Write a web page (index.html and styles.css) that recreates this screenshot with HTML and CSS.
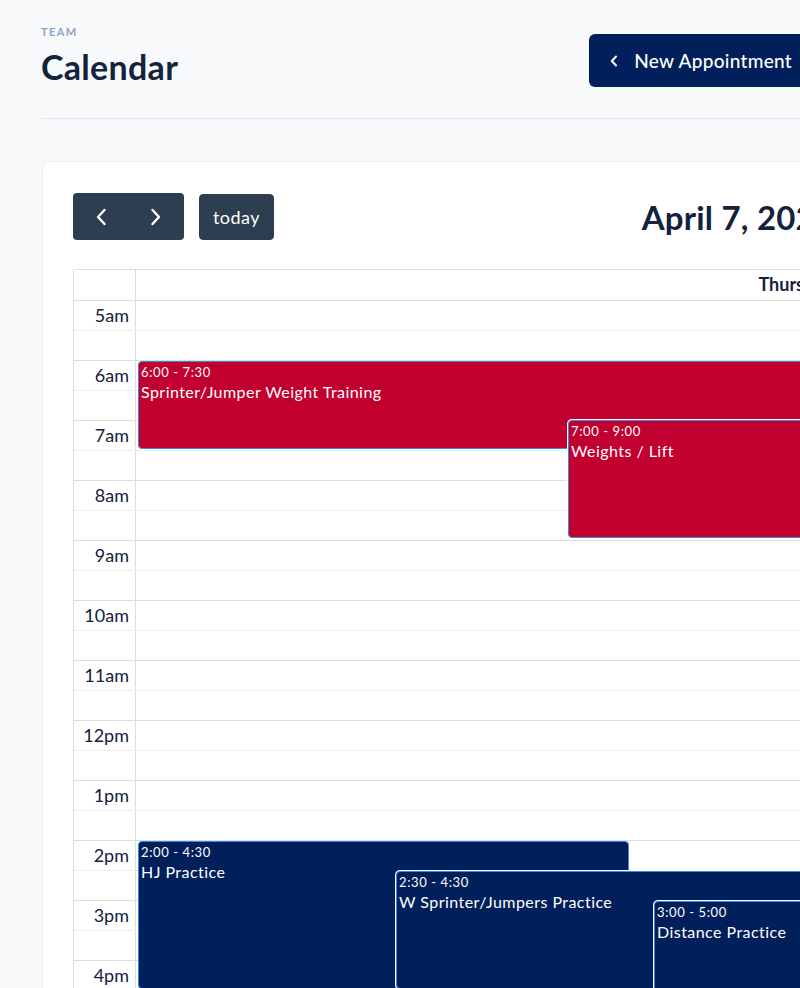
FILE: index.html
```html
<!DOCTYPE html>
<html lang="en">
<head>
<meta charset="utf-8">
<title>Team Calendar</title>
<link rel="stylesheet" href="styles.css">
</head>
<body>
<div class="page">
  <header class="page-header">
    <div class="titles">
      <div class="eyebrow">TEAM</div>
      <h1 class="page-title">Calendar</h1>
    </div>
    <button class="btn-primary" type="button">
      <svg class="chev-sm" viewBox="0 0 8 12" width="8" height="12"><path d="M6 1.5 1.8 6 6 10.5" fill="none" stroke="#fff" stroke-width="2" stroke-linecap="round" stroke-linejoin="round"/></svg>
      <span>New Appointment</span>
    </button>
  </header>
  <div class="divider"></div>

  <section class="card">
    <div class="toolbar">
      <div class="tb-left">
        <div class="btn-group nav-group">
          <button class="nav" type="button" aria-label="prev"><svg viewBox="0 0 12 18" width="12" height="18"><path d="M9.5 2 3 9l6.5 7" fill="none" stroke="#fff" stroke-width="2.4" stroke-linecap="round" stroke-linejoin="round"/></svg></button>
          <button class="nav" type="button" aria-label="next"><svg viewBox="0 0 12 18" width="12" height="18"><path d="M2.5 2 9 9l-6.5 7" fill="none" stroke="#fff" stroke-width="2.4" stroke-linecap="round" stroke-linejoin="round"/></svg></button>
        </div>
        <button class="btn-dark today" type="button">today</button>
      </div>
      <h2 class="cal-title">April 7, 2022</h2>
      <div class="btn-group tb-right">
        <button class="btn-dark" type="button">month</button>
        <button class="btn-dark" type="button">week</button>
        <button class="btn-dark" type="button">day</button>
      </div>
    </div>

    <div class="grid">
      <div class="head-row">
        <div class="axis"></div>
        <div class="day-head">Thursday</div>
      </div>
      <div class="grid-body">
        <div class="row hour"><div class="axis">5am</div><div class="lane"></div></div>
        <div class="row half"><div class="axis"></div><div class="lane"></div></div>
        <div class="row hour"><div class="axis">6am</div><div class="lane"></div></div>
        <div class="row half"><div class="axis"></div><div class="lane"></div></div>
        <div class="row hour"><div class="axis">7am</div><div class="lane"></div></div>
        <div class="row half"><div class="axis"></div><div class="lane"></div></div>
        <div class="row hour"><div class="axis">8am</div><div class="lane"></div></div>
        <div class="row half"><div class="axis"></div><div class="lane"></div></div>
        <div class="row hour"><div class="axis">9am</div><div class="lane"></div></div>
        <div class="row half"><div class="axis"></div><div class="lane"></div></div>
        <div class="row hour"><div class="axis">10am</div><div class="lane"></div></div>
        <div class="row half"><div class="axis"></div><div class="lane"></div></div>
        <div class="row hour"><div class="axis">11am</div><div class="lane"></div></div>
        <div class="row half"><div class="axis"></div><div class="lane"></div></div>
        <div class="row hour"><div class="axis">12pm</div><div class="lane"></div></div>
        <div class="row half"><div class="axis"></div><div class="lane"></div></div>
        <div class="row hour"><div class="axis">1pm</div><div class="lane"></div></div>
        <div class="row half"><div class="axis"></div><div class="lane"></div></div>
        <div class="row hour"><div class="axis">2pm</div><div class="lane"></div></div>
        <div class="row half"><div class="axis"></div><div class="lane"></div></div>
        <div class="row hour"><div class="axis">3pm</div><div class="lane"></div></div>
        <div class="row half"><div class="axis"></div><div class="lane"></div></div>
        <div class="row hour"><div class="axis">4pm</div><div class="lane"></div></div>
        <div class="row half"><div class="axis"></div><div class="lane"></div></div>
        <div class="row hour"><div class="axis">5pm</div><div class="lane"></div></div>
        <div class="row half"><div class="axis"></div><div class="lane"></div></div>

        <div class="events">
          <div class="event red" style="top:61px;height:88px;left:2px;right:2px">
            <div class="ev-time">6:00 - 7:30</div>
            <div class="ev-title">Sprinter/Jumper Weight Training</div>
          </div>
          <div class="event red inset" style="top:120px;height:118px;left:432px;right:2px">
            <div class="ev-time">7:00 - 9:00</div>
            <div class="ev-title">Weights / Lift</div>
          </div>
          <div class="event navy" style="top:541px;height:148px;left:2px;width:491px">
            <div class="ev-time">2:00 - 4:30</div>
            <div class="ev-title">HJ Practice</div>
          </div>
          <div class="event navy inset" style="top:571px;height:118px;left:260px;right:2px">
            <div class="ev-time">2:30 - 4:30</div>
            <div class="ev-title">W Sprinter/Jumpers Practice</div>
          </div>
          <div class="event navy inset" style="top:601px;height:118px;left:518px;right:2px">
            <div class="ev-time">3:00 - 5:00</div>
            <div class="ev-title">Distance Practice</div>
          </div>
        </div>
      </div>
    </div>
  </section>
</div>
</body>
</html>
```

FILE: styles.css
```css
html, body {
  margin: 0;
  padding: 0;
  overflow: hidden;
  height: 100%;
}

body {
  background: #f8f9fb;
  font-family: "Lato", "Open Sans", sans-serif;
  color: #13223d;
}

.page {
  width: 1540px;
  padding: 0 0 0 41px;
  box-sizing: border-box;
}

.page-header {
  width: 777px;
  display: flex;
  justify-content: space-between;
  align-items: flex-end;
  padding-top: 24px;
}

.eyebrow {
  font-size: 11px;
  line-height: 16px;
  font-weight: 700;
  letter-spacing: 1.4px;
  color: #8ea2c7;
}

.page-title {
  margin: 7px 0 0;
  font-size: 34px;
  line-height: 40px;
  font-weight: 700;
  letter-spacing: 0.3px;
  color: #13223d;
}

.btn-primary {
  display: flex;
  align-items: center;
  gap: 16px;
  height: 53px;
  padding: 0 26px 0 21px;
  background: #011f5b;
  color: #fff;
  border: 0;
  border-radius: 6px;
  font-family: inherit;
  font-size: 19px;
  letter-spacing: 0.3px;
  font-weight: 500;
  cursor: pointer;
}

.divider {
  height: 1px;
  background: #e2e8f0;
  margin-top: 31px;
}

.card {
  margin-top: 42px;
  margin-left: 1px;
  width: 1449px;
  box-sizing: border-box;
  background: #fff;
  border: 1px solid #edf0f4;
  border-radius: 8px;
  padding: 31px 30px 40px;
  box-shadow: 0 1px 3px rgba(15, 35, 70, 0.04);
}

.toolbar {
  display: flex;
  justify-content: space-between;
  align-items: center;
  margin-bottom: 29px;
}

.tb-left {
  display: flex;
  align-items: center;
  gap: 15px;
}

.btn-group {
  display: flex;
}

.nav-group {
  width: 111px;
  height: 47px;
  background: #2c3e50;
  border-radius: 4px;
}

.nav {
  flex: 1;
  background: transparent;
  border: 0;
  padding: 0;
  display: flex;
  align-items: center;
  justify-content: center;
  cursor: pointer;
}

.btn-dark {
  height: 46px;
  background: #2c3e50;
  border: 1px solid #2c3e50;
  color: #fff;
  font-family: inherit;
  font-size: 18px;
  letter-spacing: 0.5px;
  padding: 0 12px;
  border-radius: 4px;
  cursor: pointer;
}

.btn-group .btn-dark {
  border-radius: 0;
}

.btn-group .btn-dark:first-child {
  border-radius: 4px 0 0 4px;
}

.btn-group .btn-dark:last-child {
  border-radius: 0 4px 4px 0;
}

.btn-dark.today {
  width: 75px;
  padding: 0;
}

.tb-right .btn-dark {
  width: 86px;
}

.cal-title {
  margin: 0;
  font-size: 33px;
  line-height: 40px;
  font-weight: 700;
  letter-spacing: 0.2px;
  color: #13223d;
}

.grid {
  border-left: 1px solid #ddd;
  border-top: 1px solid #ddd;
  border-right: 1px solid #ddd;
}

.head-row {
  display: flex;
  height: 30px;
}

.axis {
  width: 62px;
  flex: none;
  box-sizing: border-box;
  border-right: 1px solid #ddd;
}

.day-head {
  flex: 1;
  text-align: center;
  font-size: 18px;
  font-weight: 700;
  line-height: 29px;
  padding-right: 4px;
  color: #13223d;
}

.grid-body {
  position: relative;
}

.row {
  display: flex;
  height: 30px;
  box-sizing: border-box;
}

.row.hour {
  border-top: 1px solid #ddd;
}

.row.half {
  border-top: 1px dotted #ddd;
}

.row .axis {
  text-align: right;
  padding-right: 6px;
  font-size: 18px;
  line-height: 28px;
  color: #13223d;
  white-space: nowrap;
}

.lane {
  flex: 1;
}

.events {
  position: absolute;
  top: 0;
  bottom: 0;
  left: 62px;
  right: 0;
}

.event {
  position: absolute;
  box-sizing: border-box;
  border: 1px solid #3b8ad9;
  border-radius: 4px;
  padding: 2px 2px 0;
  color: #fff;
  overflow: hidden;
}

.event.inset {
  box-shadow: 0 0 0 1px #fff;
}

.event.red {
  background: #c1002f;
}

.event.navy {
  background: #011f5b;
}

.ev-time {
  font-size: 13px;
  line-height: 16px;
  letter-spacing: 0.6px;
  white-space: nowrap;
}

.ev-title {
  margin-top: 2px;
  font-size: 16px;
  line-height: 20px;
  letter-spacing: 0.45px;
  white-space: nowrap;
}
```
